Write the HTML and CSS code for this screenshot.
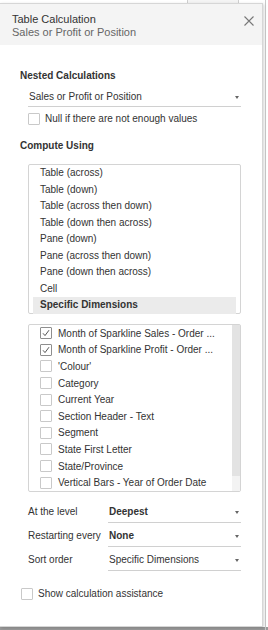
FILE: index.html
```html
<!DOCTYPE html>
<html>
<head>
<meta charset="utf-8">
<link rel="stylesheet" href="styles.css">
</head>
<body>
<div class="desk">
  <div class="bg-button"></div>
  <div class="dialog">
    <div class="header">
      <div class="titles">
        <div class="title">Table Calculation</div>
        <div class="subtitle">Sales or Profit or Position</div>
      </div>
      <svg class="close" width="10" height="10" viewBox="0 0 10 10"><path d="M0.5 0.5 L9.5 9.5 M9.5 0.5 L0.5 9.5" stroke="#777" stroke-width="1.1" fill="none"/></svg>
    </div>
    <div class="content">
      <div class="section-title first">Nested Calculations</div>
      <div class="dropdown nested">
        <span>Sales or Profit or Position</span><span class="arrow"></span>
      </div>
      <label class="cb-row nested-cb">
        <span class="cb"></span><span>Null if there are not enough values</span>
      </label>
      <div class="section-title compute">Compute Using</div>
      <div class="listbox">
        <div class="item">Table (across)</div>
        <div class="item">Table (down)</div>
        <div class="item">Table (across then down)</div>
        <div class="item">Table (down then across)</div>
        <div class="item">Pane (down)</div>
        <div class="item">Pane (across then down)</div>
        <div class="item">Pane (down then across)</div>
        <div class="item">Cell</div>
        <div class="item selected">Specific Dimensions</div>
      </div>
      <div class="dimbox">
        <div class="dims">
          <div class="dim"><span class="cb checked"><svg width="12" height="12" viewBox="0 0 12 12"><path d="M3 6.3 L5 8.6 L9 3.2" stroke="#555" stroke-width="1" fill="none"/></svg></span><span>Month of Sparkline Sales - Order ...</span></div>
          <div class="dim"><span class="cb checked"><svg width="12" height="12" viewBox="0 0 12 12"><path d="M3 6.3 L5 8.6 L9 3.2" stroke="#555" stroke-width="1" fill="none"/></svg></span><span>Month of Sparkline Profit - Order ...</span></div>
          <div class="dim"><span class="cb"></span><span>'Colour'</span></div>
          <div class="dim"><span class="cb"></span><span>Category</span></div>
          <div class="dim"><span class="cb"></span><span>Current Year</span></div>
          <div class="dim"><span class="cb"></span><span>Section Header - Text</span></div>
          <div class="dim"><span class="cb"></span><span>Segment</span></div>
          <div class="dim"><span class="cb"></span><span>State First Letter</span></div>
          <div class="dim"><span class="cb"></span><span>State/Province</span></div>
          <div class="dim"><span class="cb"></span><span>Vertical Bars - Year of Order Date</span></div>
        </div>
        <div class="scrollbar"><div class="thumb"></div></div>
      </div>
      <div class="fields">
        <div class="field">
          <div class="field-label">At the level</div>
          <div class="dropdown value"><span class="bold">Deepest</span><span class="arrow"></span></div>
        </div>
        <div class="field">
          <div class="field-label">Restarting every</div>
          <div class="dropdown value"><span class="bold">None</span><span class="arrow"></span></div>
        </div>
        <div class="field">
          <div class="field-label">Sort order</div>
          <div class="dropdown value"><span>Specific Dimensions</span><span class="arrow"></span></div>
        </div>
      </div>
      <label class="cb-row assist">
        <span class="cb"></span><span>Show calculation assistance</span>
      </label>
    </div>
  </div>
</div>
</body>
</html>
```
FILE: styles.css
```css
* { box-sizing: border-box; }
html, body { margin: 0; padding: 0; background: #fff; }
body {
  font-family: "Liberation Sans", Arial, sans-serif;
  font-size: 10px;
  color: #333;
}
.desk {
  position: relative;
  width: 268px;
  height: 630px;
  overflow: hidden;
  background:
    linear-gradient(to right, transparent 265px, #c9c9c9 265px, #c9c9c9 266px, transparent 266px),
    linear-gradient(to bottom, transparent 627px, #9a9a9a 627px);
}
.bg-button {
  position: absolute;
  left: 187px;
  top: -2px;
  width: 52px;
  height: 8px;
  border: 1px solid #cfcfcf;
  background: #f4f4f4;
}
.dialog {
  position: absolute;
  left: 0;
  top: 3px;
  width: 263px;
  height: 624px;
  background: #fff;
  border: 1px solid #d6d6d6;
  border-left: none;
  box-shadow: 1px 1px 3px rgba(0,0,0,0.18);
  display: flex;
  flex-direction: column;
}
.header {
  background: #f4f4f4;
  height: 41px;
  padding: 8px 8px 0 12px;
  display: flex;
  justify-content: space-between;
  align-items: flex-start;
}
.title {
  font-size: 11px;
  line-height: 14px;
  color: #333;
}
.subtitle {
  font-size: 11px;
  line-height: 13px;
  color: #666;
}
.close { margin-top: 4px; }
.content {
  padding: 0 21px 0 20px;
  display: flex;
  flex-direction: column;
}
.section-title {
  font-weight: bold;
  line-height: 14px;
  color: #333;
}
.section-title.first { margin-top: 24px; }
.section-title.compute { margin-top: 13px; }
.dropdown {
  display: flex;
  justify-content: space-between;
  align-items: center;
  border-bottom: 1px solid #d0d0d0;
  padding: 0 1px;
}
.dropdown.nested {
  margin: 5px 0 0 8px;
  height: 19px;
  line-height: 18px;
}
.arrow {
  width: 0;
  height: 0;
  border-left: 2.5px solid transparent;
  border-right: 2.5px solid transparent;
  border-top: 3px solid #666;
  margin-right: 1px;
}
.cb-row {
  display: flex;
  align-items: center;
  gap: 5px;
  line-height: 14px;
  height: 14px;
}
.cb {
  width: 12px;
  height: 12px;
  border: 1px solid #c9c9c9;
  border-radius: 1px;
  background: #fff;
  flex: none;
  display: block;
}
.cb svg { display: block; margin: -1px; }
.cb.checked { border-color: #8e8e8e; }
.nested-cb { margin: 5px 0 0 8px; }
.listbox {
  margin: 11px 0 0 8px;
  border: 1px solid #d4d4d4;
  border-radius: 2px;
  padding: 0 4px;
  height: 150px;
}
.item {
  height: 16.5px;
  line-height: 16.5px;
  padding-left: 7px;
}
.item.selected {
  background: #ebebeb;
  font-weight: bold;
}
.dimbox {
  margin: 10px 0 0 8px;
  border: 1px solid #d4d4d4;
  border-radius: 2px;
  height: 168px;
  display: flex;
}
.dims { flex: 1; padding-left: 11px; }
.dim {
  height: 16.6px;
  display: flex;
  align-items: center;
  gap: 6px;
}
.scrollbar {
  width: 8px;
  background: #f3f3f3;
  display: flex;
  flex-direction: column;
}
.thumb { height: 151px; background: #e3e3e3; }
.fields {
  margin: 10px 0 0 8px;
  display: flex;
  flex-direction: column;
  gap: 3px;
}
.field { display: flex; align-items: stretch; }
.field-label {
  width: 80px;
  line-height: 20px;
}
.dropdown.value {
  flex: 1;
  height: 21px;
  line-height: 20px;
}
.bold { font-weight: bold; }
.assist { margin: 16px 0 0 1px; }
```
